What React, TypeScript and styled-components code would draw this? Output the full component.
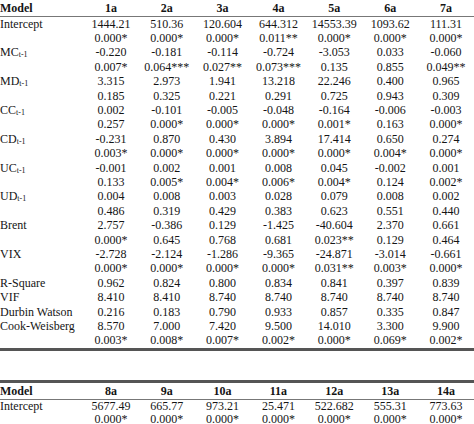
import styled, { createGlobalStyle } from "styled-components";

const GlobalStyle = createGlobalStyle`
    body {
        margin: 0;
        background: #fff;
        font-family: "Liberation Serif", "Times New Roman", serif;
        color: #151515;
    }
`

const Page = styled.div`
    width: 474px;
    display: flex;
    flex-direction: column;
    gap: 29px;
`

const Table = styled.table`
    width: 474px;
    border-collapse: collapse;
    table-layout: fixed;
    font-family: "Liberation Serif", "Times New Roman", serif;
    font-size: 12px;
`

const HeadRow = styled.tr<{ $top?: boolean }>`
    border-top: ${p => p.$top ? '3px solid #555' : 'none'};
    border-bottom: 1px solid #777;
`

const HeadCell = styled.th<{ $label?: boolean }>`
    font-weight: 700;
    text-align: ${p => p.$label ? 'left' : 'center'};
    height: 16px;
    padding: 0;
    line-height: 16px;
`

const Row = styled.tr<{ $last?: boolean }>`
    border-bottom: ${p => p.$last ? '3px solid #555' : 'none'};
`

const Cell = styled.td<{ $label?: boolean, $tight?: boolean }>`
    text-align: ${p => p.$label ? 'left' : 'center'};
    white-space: nowrap;
    height: ${p => p.$tight ? '13.2px' : '14.4px'};
    padding: 0;
    line-height: 13px;
`

const Sub = styled.sub`
    font-size: 8px;
    line-height: 0;
    vertical-align: -1px;
`

const LabelCol = styled.col`
    width: 83px;
`

type Line = { label?: string, sub?: string, values: string[] }

const tableOne: Line[] = [
    { label: 'Intercept', values: ['1444.21', '510.36', '120.604', '644.312', '14553.39', '1093.62', '111.31'] },
    { values: ['0.000*', '0.000*', '0.000*', '0.011**', '0.000*', '0.000*', '0.000*'] },
    { label: 'MC', sub: 't-1', values: ['-0.220', '-0.181', '-0.114', '-0.724', '-3.053', '0.033', '-0.060'] },
    { values: ['0.007*', '0.064***', '0.027**', '0.073***', '0.135', '0.855', '0.049**'] },
    { label: 'MD', sub: 't-1', values: ['3.315', '2.973', '1.941', '13.218', '22.246', '0.400', '0.965'] },
    { values: ['0.185', '0.325', '0.221', '0.291', '0.725', '0.943', '0.309'] },
    { label: 'CC', sub: 't-1', values: ['0.002', '-0.101', '-0.005', '-0.048', '-0.164', '-0.006', '-0.003'] },
    { values: ['0.257', '0.000*', '0.000*', '0.000*', '0.001*', '0.163', '0.000*'] },
    { label: 'CD', sub: 't-1', values: ['-0.231', '0.870', '0.430', '3.894', '17.414', '0.650', '0.274'] },
    { values: ['0.003*', '0.000*', '0.000*', '0.000*', '0.000*', '0.004*', '0.000*'] },
    { label: 'UC', sub: 't-1', values: ['-0.001', '0.002', '0.001', '0.008', '0.045', '-0.002', '0.001'] },
    { values: ['0.133', '0.005*', '0.004*', '0.006*', '0.004*', '0.124', '0.002*'] },
    { label: 'UD', sub: 't-1', values: ['0.004', '0.008', '0.003', '0.028', '0.079', '0.008', '0.002'] },
    { values: ['0.486', '0.319', '0.429', '0.383', '0.623', '0.551', '0.440'] },
    { label: 'Brent', values: ['2.757', '-0.386', '0.129', '-1.425', '-40.604', '2.370', '0.661'] },
    { values: ['0.000*', '0.645', '0.768', '0.681', '0.023**', '0.129', '0.464'] },
    { label: 'VIX', values: ['-2.728', '-2.124', '-1.286', '-9.365', '-24.871', '-3.014', '-0.661'] },
    { values: ['0.000*', '0.000*', '0.000*', '0.000*', '0.031**', '0.003*', '0.000*'] },
    { label: 'R-Square', values: ['0.962', '0.824', '0.800', '0.834', '0.841', '0.397', '0.839'] },
    { label: 'VIF', values: ['8.410', '8.410', '8.740', '8.740', '8.740', '8.740', '8.740'] },
    { label: 'Durbin Watson', values: ['0.216', '0.183', '0.790', '0.933', '0.857', '0.335', '0.847'] },
    { label: 'Cook-Weisberg', values: ['8.570', '7.000', '7.420', '9.500', '14.010', '3.300', '9.900'] },
    { values: ['0.003*', '0.008*', '0.007*', '0.002*', '0.000*', '0.069*', '0.002*'] },
]

const tableTwo: Line[] = [
    { label: 'Intercept', values: ['5677.49', '665.77', '973.21', '25.471', '522.682', '555.31', '773.63'] },
    { values: ['0.000*', '0.000*', '0.000*', '0.000*', '0.000*', '0.000*', '0.000*'] },
]

type TableProps = { models: string[], lines: Line[], top?: boolean, closed?: boolean, tight?: boolean }

const ResultsTable = ({ models, lines, top, closed, tight }: TableProps) => (
    <Table>
        <colgroup>
            <LabelCol />
            {models.map(m => <col key={m} />)}
        </colgroup>
        <thead>
            <HeadRow $top={top}>
                <HeadCell $label>Model</HeadCell>
                {models.map(m => <HeadCell key={m}>{m}</HeadCell>)}
            </HeadRow>
        </thead>
        <tbody>
            {lines.map((line, i) => (
                <Row key={i} $last={closed && i === lines.length - 1}>
                    <Cell $label $tight={tight}>
                        {line.label}
                        {line.sub && <Sub>{line.sub}</Sub>}
                    </Cell>
                    {line.values.map((v, j) => <Cell key={j} $tight={tight}>{v}</Cell>)}
                </Row>
            ))}
        </tbody>
    </Table>
)

export default function App() {
    return (
        <Page>
            <GlobalStyle />
            <ResultsTable models={['1a', '2a', '3a', '4a', '5a', '6a', '7a']} lines={tableOne} closed />
            <ResultsTable models={['8a', '9a', '10a', '11a', '12a', '13a', '14a']} lines={tableTwo} top tight />
        </Page>
    )
}
